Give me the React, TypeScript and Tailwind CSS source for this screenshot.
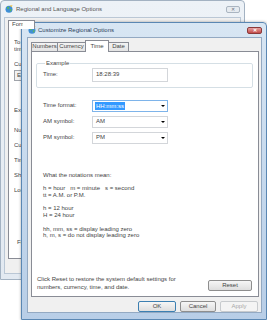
import React from 'react';

function GlobeIcon() {
  return (
    <svg width="8" height="8" viewBox="0 0 8 8" className="shrink-0">
      <circle cx="4" cy="4.2" r="3.5" fill="#3f8fd6" />
      <path d="M2 2.2 L3.6 1.6 L4.2 3 L3 4.4 L2.2 3.6 Z" fill="#5cb85c" />
      <path d="M4.8 4.4 L6.6 4 L6.2 6 L5 6.6 Z" fill="#5cb85c" />
      <path d="M4.6 0.6 L7.6 0.2 L6.4 2.2 Z" fill="#f0c040" />
    </svg>
  );
}

function Combo({ value, focused }: { value: string; focused?: boolean }) {
  return (
    <div
      className={`flex items-center w-[76px] h-[12px] pl-[2px] pr-[2px] bg-white border ${
        focused ? 'border-[#7eb4ea]' : 'border-[#d3d6da]'
      }`}
    >
      {focused ? (
        <span className="bg-[#3399ff] text-white px-[1px] leading-[8px]">{value}</span>
      ) : (
        <span className="px-[1px]">{value}</span>
      )}
      <span className="ml-auto w-0 h-0 border-l-[2px] border-r-[2px] border-t-[2px] border-l-transparent border-r-transparent border-t-black" />
    </div>
  );
}

function VistaButton({ label, primary, disabled, width }: { label: string; primary?: boolean; disabled?: boolean; width: string }) {
  return (
    <div
      className={`${width} h-[11px] flex items-center justify-center rounded-[2px] border ${
        disabled
          ? 'border-[#c8cbce] bg-[#f4f4f4] text-[#a8a8a8]'
          : primary
          ? 'border-[#3c7fb1] bg-gradient-to-b from-[#f6f6f6] to-[#dedede] text-[#444]'
          : 'border-[#8e8e8e] bg-gradient-to-b from-[#f6f6f6] to-[#dedede] text-[#444]'
      }`}
    >
      {label}
    </div>
  );
}

function BackWindow() {
  return (
    <div className="absolute left-0 top-0 w-[245px] h-[280px] flex flex-col border border-[#a3b2c2] rounded-t-[4px] bg-gradient-to-b from-[#edf2f7] to-[#e2e9f1]">
      {/* title bar */}
      <div className="h-[16px] flex items-center pl-[4px] pr-[4px] gap-[3px]">
        <GlobeIcon />
        <span className="text-[#555]">Regional and Language Options</span>
        <div className="ml-auto w-[14px] h-[7px] rounded-[2px] border border-[#aab5c1] bg-[#e6ebf0] flex items-center justify-center text-[5px] leading-none text-[#6a737d]">
          ✕
        </div>
      </div>
      {/* client */}
      <div className="flex-1 mx-[3px] mb-[5px] bg-[#f0f0f0] border border-[#bac7d5] flex flex-col pt-[1px] pl-[3px] pr-[3px] pb-[14px]">
        <div className="flex items-end h-[9px] text-[#444]">
          <div className="h-[9px] w-[27px] pl-[3px] bg-white border border-b-0 border-[#898c95] -mb-px z-10">
            <div className="w-[11px] overflow-hidden whitespace-nowrap">Formats</div>
          </div>
          <div className="h-[6px] w-[30px] border border-b-0 border-l-0 border-[#898c95] bg-[#ececec]" />
          <div className="h-[6px] w-[64px] border border-b-0 border-l-0 border-[#898c95] bg-[#ececec]" />
          <div className="h-[6px] w-[44px] border border-b-0 border-l-0 border-[#898c95] bg-[#ececec]" />
        </div>
        <div className="flex-1 bg-white border border-[#898c95] pl-[5px] pt-[10px] text-[#444] leading-[7px]">
          {/* the rest of this tab lies under the front dialog */}
          <div className="w-[8px] h-full overflow-hidden whitespace-nowrap flex flex-col">
            <p>To change the way Windows displays</p>
            <p>time and dates, select an entry</p>
            <p className="mt-[8px]">Current format:</p>
            <div className="mt-[2px] w-[20px] h-[11px] border border-[#a0a4aa] bg-[#f2f2f2] flex items-center pl-[2px]">English</div>
            <p className="mt-[26px]">Examples of how data is displayed</p>
            <div className="flex flex-col gap-[8px] mt-[13px]">
              <p>Number:</p>
              <p>Currency:</p>
              <p>Time:</p>
              <p>Short date:</p>
              <p>Long date:</p>
            </div>
            <p className="mt-auto mb-[12px] pl-[3px]">Formats</p>
          </div>
        </div>
      </div>
    </div>
  );
}

function FrontWindow() {
  return (
    <div className="absolute left-[21px] top-[22px] w-[246px] h-[298px] flex flex-col border border-[#5a87b3] rounded-t-[4px] bg-gradient-to-b from-[#d8e6f3] via-[#c6d9ed] to-[#b8cee7] shadow-[0_0_3px_rgba(0,0,0,0.35)]">
      {/* title bar */}
      <div className="h-[14px] flex items-center pl-[6px] pr-[4px] gap-[2px]">
        <GlobeIcon />
        <span className="text-[#2a3f5a]">Customize Regional Options</span>
        <div className="ml-auto w-[15px] h-[7px] rounded-[2px] border border-[#8b3a3a] bg-gradient-to-b from-[#e6a0a0] to-[#c24a4a] flex items-center justify-center text-[5px] leading-none text-white font-bold">
          ✕
        </div>
      </div>
      {/* client */}
      <div className="h-[276px] ml-[5px] mr-[4px] bg-[#f0f0f0] border border-[#93a9c2] flex flex-col pt-[1px] pl-[3px] pr-[2px] text-[#444]">
        {/* tabs */}
        <div className="flex items-end h-[12px]">
          <div className="h-[9px] w-[27px] flex items-center justify-center border border-b-0 border-[#898c95] bg-gradient-to-b from-[#f3f3f3] to-[#e3e3e3]">Numbers</div>
          <div className="h-[9px] w-[28px] flex items-center justify-center border border-b-0 border-l-0 border-[#898c95] bg-gradient-to-b from-[#f3f3f3] to-[#e3e3e3]">Currency</div>
          <div className="h-[12px] w-[24px] flex items-center justify-center border border-b-0 border-[#898c95] bg-white -mb-px -ml-px z-10">Time</div>
          <div className="h-[9px] w-[20px] flex items-center justify-center border border-b-0 border-l-0 border-[#898c95] bg-gradient-to-b from-[#f3f3f3] to-[#e3e3e3]">Date</div>
        </div>
        {/* panel */}
        <div className="h-[247px] bg-white border border-[#898c95] flex flex-col pt-[8px]">
          <fieldset className="ml-[4px] w-[217px] h-[28px] border border-[#d5dfe5] rounded-[2px] pl-[6px]">
            <legend className="ml-[2px] px-[1px] leading-[7px]">Example</legend>
            <div className="flex items-center mt-[1px]">
              <span className="w-[49px]">Time:</span>
              <div className="w-[76px] h-[14px] border border-[#d3d6da] flex items-center pl-[3px]">18:28:39</div>
            </div>
          </fieldset>

          <div className="flex flex-col gap-[4px] mt-[12px] pl-[11px]">
            <div className="flex items-center">
              <span className="w-[49px]">Time format:</span>
              <Combo value="HH:mm:ss" focused />
            </div>
            <div className="flex items-center">
              <span className="w-[49px]">AM symbol:</span>
              <Combo value="AM" />
            </div>
            <div className="flex items-center">
              <span className="w-[49px]">PM symbol:</span>
              <Combo value="PM" />
            </div>
          </div>

          <div className="mt-[28px] pl-[11px] leading-[6.7px] flex flex-col">
            <p>What the notations mean:</p>
            <p className="h-[6.7px]" />
            <p className="whitespace-pre">h = hour   m = minute   s = second</p>
            <p>tt = A.M. or P.M.</p>
            <p className="h-[6.7px]" />
            <p>h = 12 hour</p>
            <p>H = 24 hour</p>
            <p className="h-[6.7px]" />
            <p>hh, mm, ss = display leading zero</p>
            <p>h, m, s = do not display leading zero</p>
          </div>

          <div className="mt-auto mb-[5px] pl-[5px] pr-[6px] flex items-end justify-between">
            <div className="leading-[8px]">
              <p>Click Reset to restore the system default settings for</p>
              <p>numbers, currency, time, and date.</p>
            </div>
            <VistaButton label="Reset" width="w-[44px]" />
          </div>
        </div>
        {/* buttons */}
        <div className="flex justify-end gap-[4px] mt-[4px] pr-[1px]">
          <VistaButton label="OK" primary width="w-[38px]" />
          <VistaButton label="Cancel" width="w-[36px]" />
          <VistaButton label="Apply" disabled width="w-[38px]" />
        </div>
      </div>
    </div>
  );
}

export default function App() {
  return (
    <div className="relative w-[267px] h-[320px] overflow-hidden bg-white font-['Liberation_Sans',Arial,sans-serif] text-[6px] leading-[7px]">
      <BackWindow />
      <FrontWindow />
    </div>
  );
}
